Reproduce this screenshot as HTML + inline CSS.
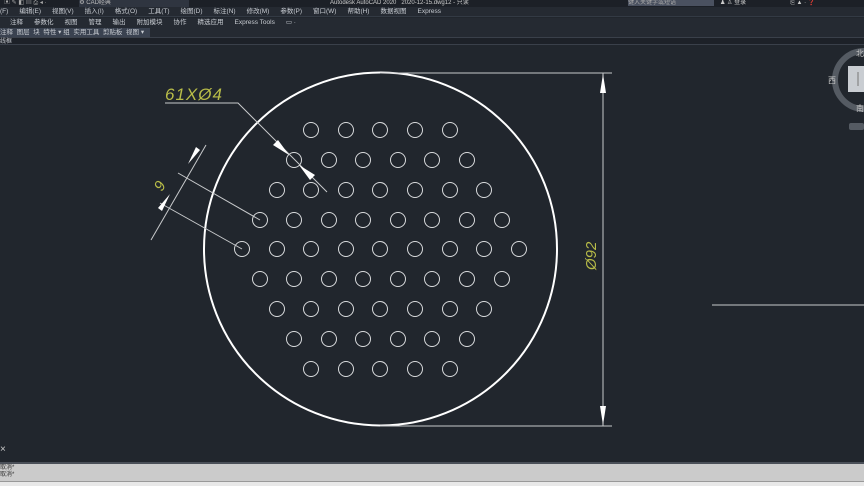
<!DOCTYPE html>
<html><head><meta charset="utf-8"><style>
*{margin:0;padding:0;box-sizing:border-box}
body{width:864px;height:486px;overflow:hidden;background:#21262d;font-family:"Liberation Sans","Noto Sans CJK SC",sans-serif;color:#c8ccd2;position:relative}
.bar{position:absolute;left:0;width:864px;font-size:6.5px;white-space:nowrap}
.bar span{display:inline-block;margin-right:11px}
</style></head><body>
<div class="bar" style="top:0;height:7px;background:#1c2027;font-size:6px;line-height:7px">
 <span style="margin-left:4px;color:#aaa">▣ ✎ ◧ ▤ ⎙ ◂ ·</span>
 <span style="background:#2f3540;width:110px;margin-left:20px;color:#bbb">⚙ CAD经典</span>
 <span style="position:absolute;left:330px;color:#ccc">Autodesk AutoCAD 2020 &nbsp; 2020-12-15.dwg12 - 只读</span>
 <span style="position:absolute;left:628px;width:86px;height:6px;background:#4a5160;color:#aaa">键入关键字或短语</span>
 <span style="position:absolute;left:720px;color:#ccc">♟ ♙ 登录</span>
 <span style="position:absolute;left:790px;color:#ccc">⎘ ▲ · ❓</span>
</div>
<div class="bar" style="top:7px;height:10px;background:#252a32;line-height:10px;border-bottom:1px solid #333a44">
 <span>(F)</span><span>编辑(E)</span><span>视图(V)</span><span>插入(I)</span><span>格式(O)</span><span>工具(T)</span><span>绘图(D)</span><span>标注(N)</span><span>修改(M)</span><span>参数(P)</span><span>窗口(W)</span><span>帮助(H)</span><span>数据视图</span><span>Express</span>
</div>
<div class="bar" style="top:18px;height:10px;background:#252a32;line-height:10px;padding-left:10px">
 <span>注释</span><span>参数化</span><span>视图</span><span>管理</span><span>输出</span><span>附加模块</span><span>协作</span><span>精选应用</span><span>Express Tools</span><span>▭ ·</span>
</div>
<div class="bar" style="top:28px;height:9px;background:#252a32;line-height:9px">
 <span style="background:#3a4250;margin-right:0;width:150px">注释 &nbsp;图层 &nbsp;块 &nbsp;特性 ▾ 组 &nbsp;实用工具 &nbsp;剪贴板 &nbsp;视图 ▾</span>
</div>
<div class="bar" style="top:37px;height:8px;background:#1d2128;line-height:8px;border-top:1px solid #3a404a;border-bottom:1px solid #3a404a;font-size:6px">线框</div>
<svg width="864" height="486" style="position:absolute;left:0;top:0" xmlns="http://www.w3.org/2000/svg">
<g fill="none" stroke="#d8dadc" stroke-width="1">
<circle cx="311" cy="130" r="7.5"/><circle cx="346" cy="130" r="7.5"/><circle cx="380" cy="130" r="7.5"/><circle cx="415" cy="130" r="7.5"/><circle cx="450" cy="130" r="7.5"/>
<circle cx="294" cy="160" r="7.5"/><circle cx="329" cy="160" r="7.5"/><circle cx="363" cy="160" r="7.5"/><circle cx="398" cy="160" r="7.5"/><circle cx="432" cy="160" r="7.5"/><circle cx="467" cy="160" r="7.5"/>
<circle cx="277" cy="190" r="7.5"/><circle cx="311" cy="190" r="7.5"/><circle cx="346" cy="190" r="7.5"/><circle cx="380" cy="190" r="7.5"/><circle cx="415" cy="190" r="7.5"/><circle cx="450" cy="190" r="7.5"/><circle cx="484" cy="190" r="7.5"/>
<circle cx="260" cy="220" r="7.5"/><circle cx="294" cy="220" r="7.5"/><circle cx="329" cy="220" r="7.5"/><circle cx="363" cy="220" r="7.5"/><circle cx="398" cy="220" r="7.5"/><circle cx="432" cy="220" r="7.5"/><circle cx="467" cy="220" r="7.5"/><circle cx="502" cy="220" r="7.5"/>
<circle cx="242" cy="249" r="7.5"/><circle cx="277" cy="249" r="7.5"/><circle cx="311" cy="249" r="7.5"/><circle cx="346" cy="249" r="7.5"/><circle cx="380" cy="249" r="7.5"/><circle cx="415" cy="249" r="7.5"/><circle cx="450" cy="249" r="7.5"/><circle cx="484" cy="249" r="7.5"/><circle cx="519" cy="249" r="7.5"/>
<circle cx="260" cy="279" r="7.5"/><circle cx="294" cy="279" r="7.5"/><circle cx="329" cy="279" r="7.5"/><circle cx="363" cy="279" r="7.5"/><circle cx="398" cy="279" r="7.5"/><circle cx="432" cy="279" r="7.5"/><circle cx="467" cy="279" r="7.5"/><circle cx="502" cy="279" r="7.5"/>
<circle cx="277" cy="309" r="7.5"/><circle cx="311" cy="309" r="7.5"/><circle cx="346" cy="309" r="7.5"/><circle cx="380" cy="309" r="7.5"/><circle cx="415" cy="309" r="7.5"/><circle cx="450" cy="309" r="7.5"/><circle cx="484" cy="309" r="7.5"/>
<circle cx="294" cy="339" r="7.5"/><circle cx="329" cy="339" r="7.5"/><circle cx="363" cy="339" r="7.5"/><circle cx="398" cy="339" r="7.5"/><circle cx="432" cy="339" r="7.5"/><circle cx="467" cy="339" r="7.5"/>
<circle cx="311" cy="369" r="7.5"/><circle cx="346" cy="369" r="7.5"/><circle cx="380" cy="369" r="7.5"/><circle cx="415" cy="369" r="7.5"/><circle cx="450" cy="369" r="7.5"/>
</g>
<circle cx="380.5" cy="249" r="176.5" fill="none" stroke="#fff" stroke-width="2"/>
<g stroke="#c8cacc" stroke-width="1" fill="none">
<line x1="380" y1="73" x2="612" y2="73"/><line x1="380" y1="426" x2="612" y2="426"/>
<line x1="603" y1="73" x2="603" y2="426"/>
<polyline points="165,103 238,103 327,192"/>
<line x1="260" y1="220" x2="178" y2="173"/><line x1="242" y1="249" x2="160" y2="203"/>
<line x1="206" y1="145" x2="151" y2="240"/>
<line x1="712" y1="305" x2="864" y2="305"/>
</g>
<g fill="#fff">
<polygon points="603,74 600,93 606,93"/><polygon points="603,425 600,406 606,406"/>
<polygon points="289,155 273,145 278,140"/><polygon points="299,165 315,175 310,180"/>
<polygon points="188,164 196,147 200,150"/><polygon points="170,194 162,211 158,208"/>
</g>
<g fill="#b8bc48" font-family="Liberation Sans,sans-serif" font-style="italic">
<text x="165" y="100" font-size="17" letter-spacing="1" font-weight="normal">61XØ4</text>
<text x="0" y="0" font-size="15" transform="translate(596,270) rotate(-90)">Ø92</text>
<text x="0" y="0" font-size="15" transform="translate(162,192) rotate(-60)">9</text>
</g>
<circle cx="864" cy="80" r="29" fill="none" stroke="#555b63" stroke-width="6"/>
<rect x="848" y="66" width="16" height="26" fill="#c9cdd2"/>
<line x1="858" y1="72" x2="858" y2="86" stroke="#777" stroke-width="1"/>
<text x="828" y="83" font-size="8" fill="#ccc" font-family="Noto Sans CJK SC,sans-serif">西</text>
<text x="856" y="56" font-size="8" fill="#ccc" font-family="Noto Sans CJK SC,sans-serif">北</text>
<text x="856" y="111" font-size="8" fill="#ccc" font-family="Noto Sans CJK SC,sans-serif">南</text>
<rect x="849" y="123" width="15" height="7" rx="2" fill="#555b63"/>
<text x="0" y="452" font-size="10" fill="#ccc">×</text>
</svg>
<div style="position:absolute;left:0;top:462px;width:864px;height:2px;background:#4a4f58"></div>
<div style="position:absolute;left:0;top:464px;width:864px;height:17px;background:#cbcbcb;font-size:6px;line-height:7px;color:#333;padding-top:1px">取消*<br>取消*</div>
<div style="position:absolute;left:0;top:481px;width:864px;height:5px;background:#e8e8e8;border-top:1px solid #999"></div>
</body></html>
